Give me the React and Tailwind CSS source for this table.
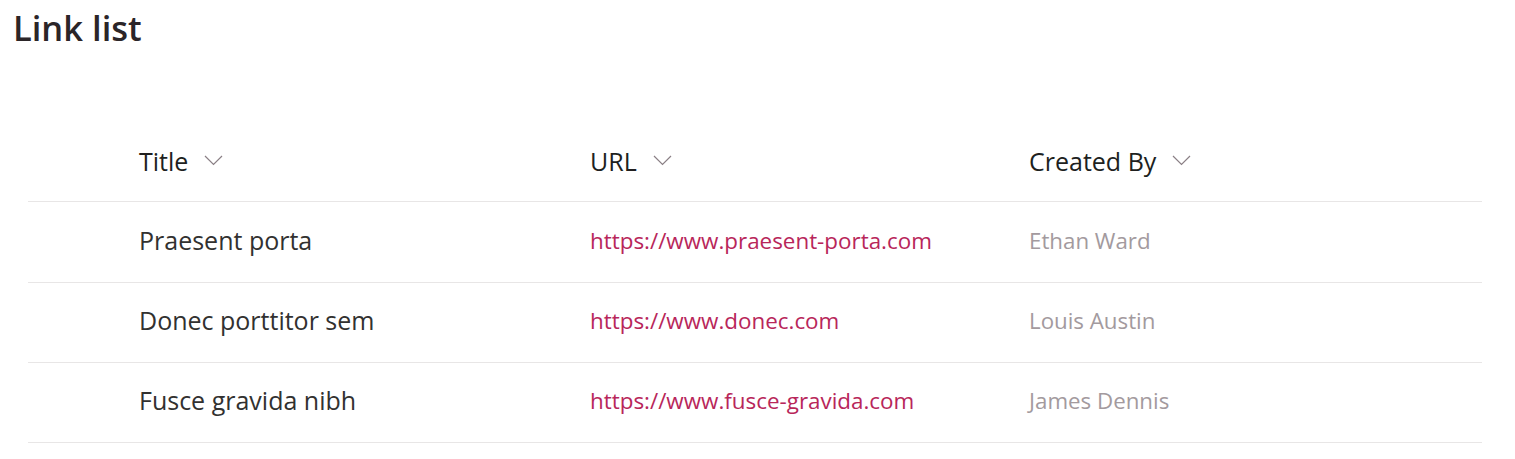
const rows = [
  { title: 'Praesent porta', url: 'https://www.praesent-porta.com', by: 'Ethan Ward', h: 'h-[81px]' },
  { title: 'Donec porttitor sem', url: 'https://www.donec.com', by: 'Louis Austin', h: 'h-[80px]' },
  { title: 'Fusce gravida nibh', url: 'https://www.fusce-gravida.com', by: 'James Dennis', h: 'h-[80px]' },
];

function Chevron() {
  return (
    <svg width="19" height="11" viewBox="0 0 19 11" fill="none" className="mt-[-3px]">
      <polyline points="1,1 9.5,9.5 18,1" stroke="#8a7f85" strokeWidth="1.2" />
    </svg>
  );
}

function HeaderCell({ label }) {
  return (
    <div className="flex items-center gap-[16px]">
      <span>{label}</span>
      <Chevron />
    </div>
  );
}

export default function App() {
  return (
    <div className="min-h-[459px] bg-white font-['Open_Sans',sans-serif] text-[#323130]">
      <h1 className="pl-[13px] pt-[6px] text-[34.5px] font-semibold leading-[44px] text-[#2b2528]">Link list</h1>

      <div className="ml-[28px] mt-[72px] w-[1454px]">
        <div className="grid h-[80px] grid-cols-[451px_439px_1fr] items-center border-b border-[#e8e6e6] pl-[111px] text-[25px] font-medium text-[#201f1e]">
          <HeaderCell label="Title" />
          <HeaderCell label="URL" />
          <HeaderCell label="Created By" />
        </div>
        {rows.map((r) => (
          <div
            key={r.title}
            className={`grid ${r.h} grid-cols-[451px_439px_1fr] items-center border-b border-[#e8e6e6] pl-[111px] pb-[3px]`}
          >
            <span className="text-[25px] text-[#323130]">{r.title}</span>
            <a href="#" className="text-[22.4px] text-[#b8265a]" onClick={(e) => e.preventDefault()}>{r.url}</a>
            <span className="text-[22.3px] text-[#a39a9e]">{r.by}</span>
          </div>
        ))}
      </div>
    </div>
  );
}
